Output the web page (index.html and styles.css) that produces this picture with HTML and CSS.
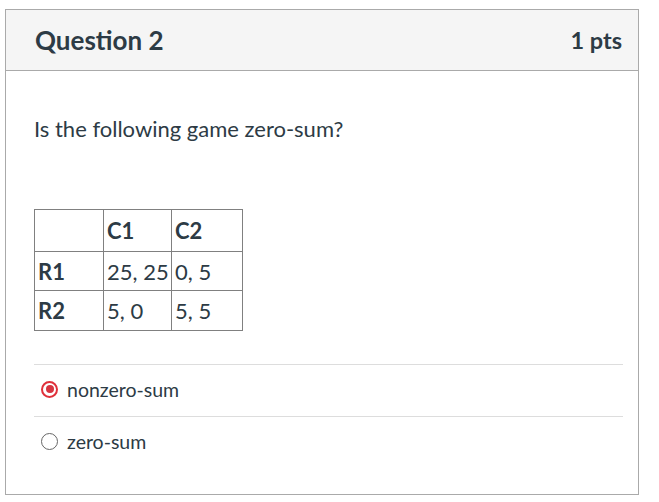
FILE: index.html
```html
<!DOCTYPE html>
<html>
<head>
<meta charset="utf-8">
<link rel="stylesheet" href="styles.css">
</head>
<body>
<div class="question">
  <div class="header">
    <h2 class="title">Question 2</h2>
    <span class="pts">1 pts</span>
  </div>
  <div class="body">
    <p class="prompt">Is the following game zero-sum?</p>
    <table class="game">
      <colgroup><col class="k1"><col class="k2"><col class="k3"></colgroup>
      <tr class="r0"><td></td><td class="bold">C1</td><td class="bold">C2</td></tr>
      <tr class="r1"><td class="bold">R1</td><td>25, 25</td><td>0, 5</td></tr>
      <tr class="r2"><td class="bold">R2</td><td>5, 0</td><td>5, 5</td></tr>
    </table>
    <div class="answers">
      <label class="answer"><span class="radio checked"></span><span>nonzero-sum</span></label>
      <label class="answer"><span class="radio"></span><span>zero-sum</span></label>
    </div>
  </div>
</div>
</body>
</html>
```
FILE: styles.css
```css
html, body { margin: 0; padding: 0; background: #fff; }
body { font-family: Lato, "Noto Sans", sans-serif; color: #2d3b45; }
.question {
  margin: 9px 0 0 5px;
  width: 632px;
  height: 484px;
  border: 1px solid #aaaaaa;
}
.header {
  height: 60px;
  background: #f5f5f5;
  border-bottom: 1px solid #aaaaaa;
  display: flex;
  align-items: center;
  justify-content: space-between;
  padding: 0 16px 0 29px;
}
.title { margin: 0; font-size: 26px; font-weight: 700; color: #2d3b45; }
.pts { font-size: 23.5px; font-weight: 700; color: #2d3b45; }
.body { padding: 0 15px 0 28px; }
.prompt { margin: 45px 0 0; font-size: 22px; line-height: 26px; }
.game {
  margin-top: 67px;
  border-collapse: collapse;
  table-layout: fixed;
  width: 209px;
  font-size: 22px;
}
.k1 { width: 69px; }
.k2 { width: 68px; }
.k3 { width: 71px; }
.game td {
  border: 1px solid #808080;
  padding: 0 3px;
  vertical-align: middle;
  white-space: nowrap;
}
.r0 td { height: 41px; }
.r1 td { height: 38px; }
.r2 td { height: 39px; }
.bold { font-weight: 700; }
.answers { margin-top: 33px; }
.answer {
  display: flex;
  align-items: center;
  gap: 9px;
  height: 48px;
  padding-bottom: 3px;
  border-top: 1px solid #dddddd;
  padding-left: 7px;
  font-size: 19.5px;
}
.radio {
  width: 17px; height: 17px;
  border: 1px solid #666;
  border-radius: 50%;
  box-sizing: border-box;
  background: #fff;
  position: relative;
  flex: none;
}
.radio.checked { border: 2px solid #e0303a; }
.radio.checked::after {
  content: "";
  position: absolute;
  left: 2.5px; top: 2.5px;
  width: 8px; height: 8px;
  border-radius: 50%;
  background: #d63440;
}
```
